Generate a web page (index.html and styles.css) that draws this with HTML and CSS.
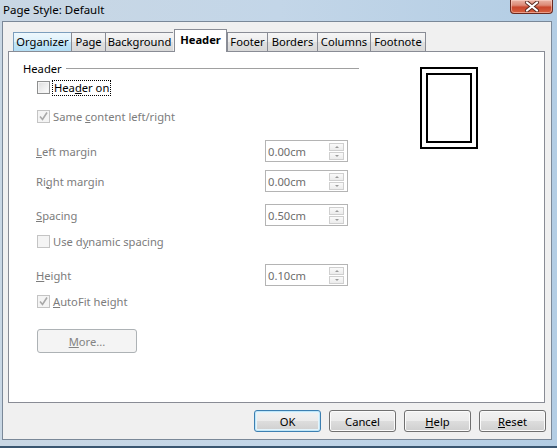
FILE: index.html
```html
<!DOCTYPE html>
<html>
<head>
<meta charset="utf-8">
<title>Page Style: Default</title>
<link rel="stylesheet" href="styles.css">
</head>
<body>
<div class="window">
  <div class="titlebar">
    <span class="title">Page Style: Default</span>
    <span class="close">
      <svg width="16" height="11" viewBox="0 0 16 11">
        <path d="M3 1.5 L13 9.5 M13 1.5 L3 9.5" stroke="#5a2a20" stroke-width="4" stroke-linecap="round"/>
        <path d="M3 1.5 L13 9.5 M13 1.5 L3 9.5" stroke="#ffffff" stroke-width="2.2" stroke-linecap="round"/>
      </svg>
    </span>
  </div>
  <div class="client">
    <div class="tabs">
      <div class="tab tab-organizer hover">Organizer</div>
      <div class="tab tab-page">Page</div>
      <div class="tab tab-background">Background</div>
      <div class="tab tab-header selected">Header</div>
      <div class="tab tab-footer">Footer</div>
      <div class="tab tab-borders">Borders</div>
      <div class="tab tab-columns">Columns</div>
      <div class="tab tab-footnote last">Footnote</div>
    </div>
    <div class="panel">
      <div class="settings">
        <div class="group-title"><span>Header</span><span class="rule"></span></div>

        <div class="row check-row mt4">
          <span class="box"></span>
          <span class="focus">Hea<u>d</u>er on</span>
        </div>

        <div class="row check-row disabled mt14">
          <span class="box">
            <svg width="11" height="11" viewBox="0 0 11 11"><path d="M2 5.5 L4.5 8.5 L9 1.5" fill="none" stroke="#a8a8a8" stroke-width="1.6"/></svg>
          </span>
          <span>Same <u>c</u>ontent left/right</span>
        </div>

        <div class="row field-row disabled mt16">
          <span class="label"><u>L</u>eft margin</span>
          <span class="field"><span class="value">0.00cm</span><span class="spin"><span class="up"></span><span class="down"></span></span></span>
        </div>

        <div class="row field-row disabled mt8">
          <span class="label">Ri<u>g</u>ht margin</span>
          <span class="field"><span class="value">0.00cm</span><span class="spin"><span class="up"></span><span class="down"></span></span></span>
        </div>

        <div class="row field-row disabled mt12">
          <span class="label"><u>S</u>pacing</span>
          <span class="field"><span class="value">0.50cm</span><span class="spin"><span class="up"></span><span class="down"></span></span></span>
        </div>

        <div class="row check-row disabled mt8">
          <span class="box"></span>
          <span>Use d<u>y</u>namic spacing</span>
        </div>

        <div class="row field-row disabled mt15">
          <span class="label"><u>H</u>eight</span>
          <span class="field"><span class="value">0.10cm</span><span class="spin"><span class="up"></span><span class="down"></span></span></span>
        </div>

        <div class="row check-row disabled mt8">
          <span class="box">
            <svg width="11" height="11" viewBox="0 0 11 11"><path d="M2 5.5 L4.5 8.5 L9 1.5" fill="none" stroke="#a8a8a8" stroke-width="1.6"/></svg>
          </span>
          <span><u>A</u>utoFit height</span>
        </div>

        <div class="row mt20">
          <span class="more-btn"><u>M</u>ore...</span>
        </div>
      </div>
      <div class="preview">
        <div class="page"><div class="page-inner"></div></div>
      </div>
    </div>
    <div class="buttons">
      <span class="btn default">OK</span>
      <span class="btn">Cancel</span>
      <span class="btn"><u>H</u>elp</span>
      <span class="btn"><u>R</u>eset</span>
    </div>
  </div>
</div>
</body>
</html>
```

FILE: styles.css
```css
html, body {
  margin: 0;
  padding: 0;
}
body {
  width: 557px;
  height: 448px;
  overflow: hidden;
  font-family: "Noto Sans", "DejaVu Sans", sans-serif;
  font-size: 11.2px;
  color: #000;
}
u { text-decoration: underline; text-underline-offset: 1px; }

.window {
  width: 557px;
  height: 448px;
  box-sizing: border-box;
  display: flex;
  flex-direction: column;
  background: linear-gradient(to right, #c9d7e4 0%, #c3d6e8 50%, #b3cde4 100%);
  border-bottom: 2px solid #3a5670;
}

.titlebar {
  height: 21px;
  flex: none;
  display: flex;
  align-items: flex-start;
  justify-content: space-between;
}
.title {
  margin-left: 3px;
  margin-top: 2px;
  line-height: 16px;
  font-size: 11.5px;
  color: #000;
}
.close {
  width: 41px;
  height: 13px;
  margin-right: 4px;
  border: 1px solid #6a2a20;
  border-top: none;
  border-radius: 0 0 4px 4px;
  background: linear-gradient(#eab4a6 0%, #dd8a76 40%, #c9472d 55%, #d7603f 100%);
  box-shadow: inset 0 0 0 1px rgba(255, 220, 210, 0.5);
  display: flex;
  align-items: center;
  justify-content: center;
}

.client {
  flex: none;
  height: 419px;
  margin-left: 2px;
  margin-right: 5px;
  box-sizing: border-box;
  border: 1px solid #7a8898;
  background: #f0f0f0;
  display: flex;
  flex-direction: column;
}

.tabs {
  height: 22px;
  margin-top: 7px;
  margin-left: 10px;
  display: flex;
  align-items: flex-end;
  flex: none;
}
.tab {
  height: 19px;
  box-sizing: border-box;
  border: 1px solid #898c95;
  border-right: none;
  border-bottom: none;
  background: linear-gradient(#f6f6f6 0%, #ececec 50%, #e0e0e0 51%, #d8d8d8 100%);
  display: flex;
  align-items: center;
  justify-content: center;
  white-space: nowrap;
  line-height: 16px;
}
.tab.last { border-right: 1px solid #898c95; }
.tab.hover {
  border-color: #7b9ebd;
  background: linear-gradient(#eef8fd 0%, #dcf1fc 50%, #c3e6f8 51%, #b3ddf3 100%);
}
.tab.selected {
  height: 23px;
  margin-bottom: -1px;
  margin-left: 1px;
  border-right: 1px solid #898c95;
  background: #fff;
  font-weight: bold;
  position: relative;
  z-index: 1;
  padding-bottom: 2px;
}
.tab-organizer { width: 58px; }
.tab-page { width: 34px; }
.tab-background { width: 68px; }
.tab-header { width: 53px; }
.tab-footer { width: 40px; }
.tab-borders { width: 50px; }
.tab-columns { width: 53px; }
.tab-footnote { width: 56px; }

.panel {
  flex: none;
  height: 352px;
  width: 537px;
  margin-left: 5px;
  box-sizing: border-box;
  border: 1px solid #898c95;
  background: #fff;
  display: flex;
  align-items: flex-start;
}

.settings {
  width: 350px;
  padding-left: 14px;
  padding-top: 8px;
  box-sizing: border-box;
  display: flex;
  flex-direction: column;
}
.group-title {
  height: 16px;
  display: flex;
  align-items: center;
}
.group-title .rule {
  flex: 1;
  height: 1px;
  background: #a0a0a0;
  margin-left: 4px;
}

.row {
  display: flex;
  align-items: center;
  margin-left: 13px;
  white-space: nowrap;
}
.mt4 { margin-top: 4px; }
.mt8 { margin-top: 8px; }
.mt12 { margin-top: 12px; }
.mt14 { margin-top: 14px; }
.mt15 { margin-top: 15px; }
.mt16 { margin-top: 16px; }
.mt20 { margin-top: 20px; }

.check-row { height: 15px; }
.box {
  width: 13px;
  height: 13px;
  box-sizing: border-box;
  margin-left: 1px;
  margin-right: 3px;
  border: 1px solid #8e8f8f;
  background: linear-gradient(135deg, #dcdcdc 0%, #f4f4f4 70%, #ffffff 100%);
  box-shadow: inset 0 0 0 1px #f4f4f4;
  display: flex;
  align-items: center;
  justify-content: center;
  flex: none;
}
.disabled { color: #7c7c7c; }
.disabled .box {
  border-color: #c4c4c4;
  background: #f4f4f4;
  box-shadow: none;
}
.focus {
  outline: 1px dotted #000;
  outline-offset: 0;
  padding: 0 1px;
  line-height: 14px;
}

.field-row { height: 22px; }
.label { width: 229px; flex: none; }
.field {
  width: 83px;
  height: 22px;
  box-sizing: border-box;
  border: 1px solid #b4b4b4;
  background: #fff;
  display: flex;
  align-items: center;
  justify-content: space-between;
}
.value { margin-left: 2px; color: #6d6d6d; }
.spin {
  width: 15px;
  margin-right: 3px;
  display: flex;
  flex-direction: column;
  gap: 1px;
}
.spin span {
  height: 8px;
  box-sizing: border-box;
  border: 1px solid #cfcfcf;
  background: linear-gradient(#fafafa, #ececec);
  display: flex;
  align-items: center;
  justify-content: center;
}
.spin .up::after {
  content: "";
  border-left: 2px solid transparent;
  border-right: 2px solid transparent;
  border-bottom: 2px solid #9a9a9a;
}
.spin .down::after {
  content: "";
  border-left: 2px solid transparent;
  border-right: 2px solid transparent;
  border-top: 2px solid #9a9a9a;
}

.more-btn {
  width: 100px;
  height: 24px;
  margin-left: 1px;
  box-sizing: border-box;
  border: 1px solid #adb2b5;
  border-radius: 3px;
  background: #f4f4f4;
  color: #838383;
  display: flex;
  align-items: center;
  justify-content: center;
}

.preview {
  margin-left: 61px;
  margin-top: 15px;
}
.page {
  width: 58px;
  height: 82px;
  box-sizing: border-box;
  border: 2px solid #000;
  padding: 4px;
}
.page-inner {
  width: 46px;
  height: 70px;
  box-sizing: border-box;
  border: 2px solid #000;
}

.buttons {
  margin-top: 7px;
  padding-right: 5px;
  display: flex;
  justify-content: flex-end;
  gap: 8px;
}
.btn {
  width: 67px;
  height: 22px;
  box-sizing: border-box;
  border: 1px solid #707070;
  border-radius: 3px;
  background: linear-gradient(#f2f2f2 0%, #ebebeb 50%, #dddddd 51%, #cfcfcf 100%);
  box-shadow: inset 0 0 0 1px #fbfbfb;
  display: flex;
  align-items: center;
  justify-content: center;
}
.btn.default {
  border-color: #3c7fb1;
  box-shadow: inset 0 0 0 1px #bfe6f8, inset 0 0 0 2px #e4f4fc;
}
```
